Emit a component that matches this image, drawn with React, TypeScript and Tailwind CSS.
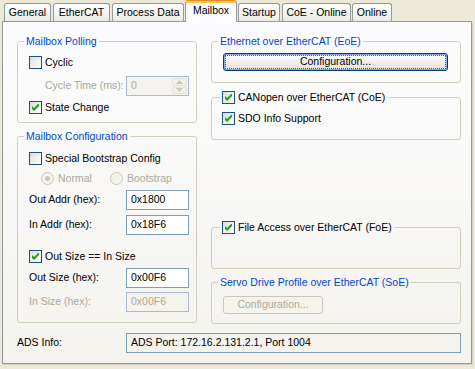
import type { ReactNode } from "react";

const tabs = [
  { label: "General", w: "w-[47px]", ml: "ml-0" },
  { label: "EtherCAT", w: "w-[57px]", ml: "ml-[2px]" },
  { label: "Process Data", w: "w-[72px]", ml: "ml-[2px]" },
  { label: "Mailbox", w: "w-[52px]", ml: "ml-[1px]", active: true },
  { label: "Startup", w: "w-[42px]", ml: "ml-[1px]" },
  { label: "CoE - Online", w: "w-[69px]", ml: "ml-[2px]" },
  { label: "Online", w: "w-[40px]", ml: "ml-[1px]" },
];

const Check = ({ checked }: { checked?: boolean }) => (
  <span className="flex h-[13px] w-[13px] shrink-0 items-center justify-center border border-[#1c5180] bg-linear-to-br from-[#dcdcd7] to-white">
    {checked && (
      <svg width="7" height="7" viewBox="0 0 7 7">
        <polygon points="0,2 2,4 7,-1 7,2 2,7 0,5" fill="#21a121" />
      </svg>
    )}
  </span>
);

const Radio = ({ dot }: { dot?: boolean }) => (
  <span className="flex h-[13px] w-[13px] shrink-0 items-center justify-center rounded-full border border-[#cac8bb] bg-[#f4f3ee]">
    {dot && <span className="h-[5px] w-[5px] rounded-full bg-[#cac8bb]" />}
  </span>
);

const Field = ({ value, disabled }: { value: string; disabled?: boolean }) => (
  <div
    className={
      disabled
        ? "flex h-[20px] w-[63px] items-center border border-[#a9b9cf] bg-[#f4f3ee] pl-[4px] text-[#aca899]"
        : "flex h-[20px] w-[63px] items-center border border-[#7f9db9] bg-white pl-[4px]"
    }
  >
    {value}
  </div>
);

const Spin = () => (
  <div className="flex h-[20px] w-[63px] items-center border border-[#a9b9cf] bg-[#f4f3ee] pl-[4px] text-[#aca899]">
    <span className="flex-1">0</span>
    <div className="mr-[1px] flex h-[16px] w-[15px] flex-col gap-[1px]">
      <div className="flex flex-1 items-center justify-center rounded-[2px] border border-[#e4e2d6] bg-[#f2f1ea]">
        <svg width="7" height="4" viewBox="0 0 7 4">
          <polygon points="0,4 3.5,0 7,4" fill="#c9c7ba" />
        </svg>
      </div>
      <div className="flex flex-1 items-center justify-center rounded-[2px] border border-[#e4e2d6] bg-[#f2f1ea]">
        <svg width="7" height="4" viewBox="0 0 7 4">
          <polygon points="0,0 3.5,4 7,0" fill="#c9c7ba" />
        </svg>
      </div>
    </div>
  </div>
);

const Group = ({
  legend,
  h,
  className = "",
  children,
}: {
  legend: ReactNode;
  h: string;
  className?: string;
  children?: ReactNode;
}) => (
  <fieldset className={`${h} ${className} min-w-0 rounded-[3px] border border-[#d0d0bf] p-0`}>
    {legend}
    {children}
  </fieldset>
);

const BlueLegend = ({ text }: { text: string }) => (
  <legend className="ml-[6px] px-[2px] leading-[14px] text-[#0046d5]">{text}</legend>
);

const CheckLegend = ({ text }: { text: string }) => (
  <legend className="ml-[8px] flex items-center gap-[3px] pl-[2px] pr-[3px] leading-[14px]">
    <Check checked />
    {text}
  </legend>
);

export default function App() {
  return (
    <div className="h-[369px] w-[475px] whitespace-nowrap bg-[#ece9d8] font-['Liberation_Sans',Arial,sans-serif] text-[10.5px] text-black">
      <div className="flex h-[21px] items-end pl-[4px]">
        {tabs.map((t) =>
          t.active ? (
            <div
              key={t.label}
              className={`${t.w} ${t.ml} relative z-10 -mb-px flex h-[22px] flex-col rounded-t-[3px] border-x border-t border-[#919b9c] border-t-[#e68b2c] bg-[#fcfcfe]`}
            >
              <div className="h-[2px] bg-[#ffc83c]" />
              <div className="flex flex-1 items-center justify-center pb-[3px]">{t.label}</div>
            </div>
          ) : (
            <div
              key={t.label}
              className={`${t.w} ${t.ml} flex h-[18px] items-center justify-center rounded-t-[3px] border-x border-t border-[#919b9c] bg-linear-to-b from-white to-[#ecebe6]`}
            >
              {t.label}
            </div>
          )
        )}
      </div>

      <div className="ml-[2px] h-[343px] w-[470px] border border-[#919b9c] bg-linear-to-b from-[#fcfcfe] to-[#f4f3ee] pl-[14px] pt-[12px] shadow-[1px_1px_0_#d6d2c2]">
        <div className="flex gap-[14px]">
          <div className="flex w-[180px] flex-col">
            <Group h="h-[89px]" legend={<BlueLegend text="Mailbox Polling" />}>
              <div className="pl-[11px]">
                <div className="mt-[8px] flex h-[13px] items-center gap-[3px]">
                  <Check />
                  Cyclic
                </div>
                <div className="mt-[7px] flex h-[20px] items-center">
                  <span className="w-[97px] pl-[16px] text-[#aca899]">Cycle Time (ms):</span>
                  <Spin />
                </div>
                <div className="mt-[5px] flex h-[13px] items-center gap-[3px]">
                  <Check checked />
                  State Change
                </div>
              </div>
            </Group>

            <Group h="h-[194px]" className="mt-[6px]" legend={<BlueLegend text="Mailbox Configuration" />}>
              <div className="pl-[11px]">
                <div className="mt-[9px] flex h-[13px] items-center gap-[3px]">
                  <Check />
                  Special Bootstrap Config
                </div>
                <div className="mt-[7px] flex h-[13px] items-center pl-[12px] text-[#aca899]">
                  <Radio dot />
                  <span className="ml-[4px] w-[52px]">Normal</span>
                  <Radio />
                  <span className="ml-[4px]">Bootstrap</span>
                </div>
                <div className="mt-[5px] flex h-[20px] items-center">
                  <span className="w-[97px]">Out Addr (hex):</span>
                  <Field value="0x1800" />
                </div>
                <div className="mt-[5px] flex h-[20px] items-center">
                  <span className="w-[97px]">In Addr (hex):</span>
                  <Field value="0x18F6" />
                </div>
                <div className="mt-[15px] flex h-[13px] items-center gap-[3px]">
                  <Check checked />
                  Out Size == In Size
                </div>
                <div className="mt-[5px] flex h-[20px] items-center">
                  <span className="w-[97px]">Out Size (hex):</span>
                  <Field value="0x00F6" />
                </div>
                <div className="mt-[4px] flex h-[20px] items-center">
                  <span className="w-[97px] text-[#aca899]">In Size (hex):</span>
                  <Field value="0x00F6" disabled />
                </div>
              </div>
            </Group>
          </div>

          <div className="flex w-[250px] flex-col">
            <Group h="h-[49px]" legend={<BlueLegend text="Ethernet over EtherCAT (EoE)" />}>
              <button className="ml-[11px] mt-[5px] flex h-[18px] w-[225px] items-center justify-center rounded-[3px] border border-[#003c74] bg-linear-to-b from-white to-[#e3e1d6] p-[1px] shadow-[inset_0_0_0_1px_#8aa8e6]">
                <span className="flex h-full w-full items-center justify-center border border-dotted border-[#555]">
                  Configuration...
                </span>
              </button>
            </Group>

            <Group h="h-[50px]" className="mt-[7px]" legend={<CheckLegend text="CANopen over EtherCAT (CoE)" />}>
              <div className="ml-[10px] mt-[8px] flex h-[13px] items-center gap-[3px]">
                <Check checked />
                SDO Info Support
              </div>
            </Group>

            <Group h="h-[49px]" className="mt-[80px]" legend={<CheckLegend text="File Access over EtherCAT (FoE)" />} />

            <Group h="h-[49px]" className="mt-[6px]" legend={<BlueLegend text="Servo Drive Profile over EtherCAT (SoE)" />}>
              <div className="ml-[11px] mt-[7px] flex h-[18px] w-[100px] items-center justify-center rounded-[3px] border border-[#c9c7ba] bg-[#f5f4ea] text-[#aca899]">
                Configuration...
              </div>
            </Group>
          </div>
        </div>

        <div className="mt-[9px] flex h-[20px] items-center">
          <span className="w-[109px]">ADS Info:</span>
          <div className="flex h-[20px] w-[335px] items-center border border-[#7f9db9] bg-[#f4f3ee] pl-[4px]">
            ADS Port: 172.16.2.131.2.1, Port 1004
          </div>
        </div>
      </div>
    </div>
  );
}
